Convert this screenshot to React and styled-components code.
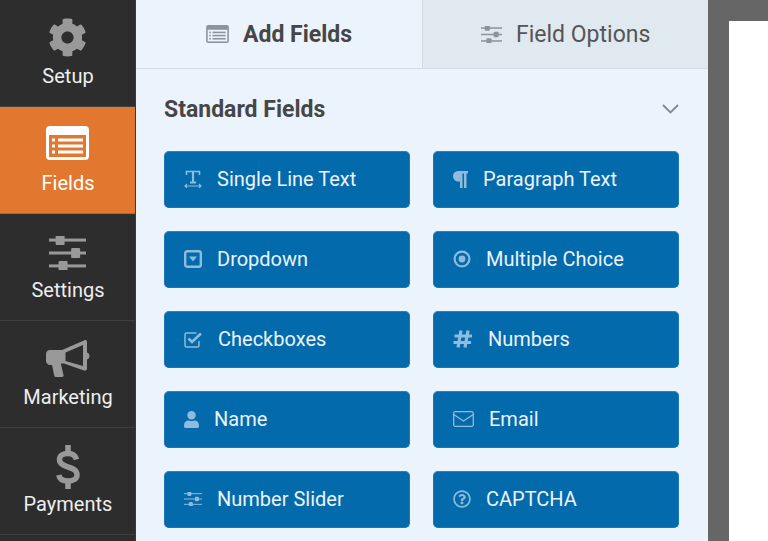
import React from "react"
import styled, { createGlobalStyle } from "styled-components"
import { FaCog, FaUser, FaRegQuestionCircle } from "react-icons/fa"

const Global = createGlobalStyle`
html, body {
  margin: 0;
  padding: 0;
  height: 541px;
  overflow: hidden;
  font-family: Roboto, "Liberation Sans", sans-serif;
}
svg {
  flex: none;
}
`

const Page = styled.div`
display: flex;
width: 768px;
height: 541px;
overflow: hidden;
`

const Sidebar = styled.nav`
width: 136px;
flex: none;
background: #2d2d2d;
border-right: 1px solid #3a3a3a;
box-sizing: border-box;
`

const NavItem = styled.div`
height: 107px;
box-sizing: border-box;
border-bottom: 1px solid ${p => (p.$active ? "#b9622a" : "#404040")};
background: ${p => (p.$active ? "#e27730" : "transparent")};
color: ${p => (p.$active ? "#fff" : "#999")};
display: flex;
flex-direction: column;
align-items: center;
padding-top: 18px;
`

const NavIcon = styled.div`
height: 38px;
display: flex;
align-items: center;
justify-content: center;
transform: translateY(${p => p.$shift || 0}px);
`

const NavLabel = styled.div`
margin-top: 8px;
padding-left: 1px;
font-size: 20px;
line-height: 24px;
color: ${p => (p.$active ? "#fff" : "#eee")};
`

const Panel = styled.main`
width: 572px;
flex: none;
background: #ebf3fc;
`

const Tabs = styled.div`
display: flex;
height: 69px;
box-sizing: border-box;
border-bottom: 1px solid #d3dbe3;
`

const Tab = styled.div`
flex: ${p => (p.$active ? "0 0 287px" : "1")};
box-sizing: border-box;
display: flex;
align-items: center;
padding-left: ${p => (p.$active ? "70px" : "58px")};
gap: 14px;
background: ${p => (p.$active ? "#ebf3fc" : "#e0e8f0")};
border-right: ${p => (p.$active ? "1px solid #d3dbe3" : "none")};
color: ${p => (p.$active ? "#464646" : "#555")};
font-size: 23px;
font-weight: ${p => (p.$active ? 700 : 400)};
`

const TabIcon = styled.span`
display: flex;
color: #8b949c;
`

const Section = styled.section`
padding: 0 29px 0 28px;
`

const SectionHead = styled.div`
height: 80px;
margin-bottom: 2px;
display: flex;
align-items: center;
justify-content: space-between;
color: #464646;
font-size: 23px;
font-weight: 700;
`

const FieldGrid = styled.div`
display: grid;
grid-template-columns: 246px 246px;
column-gap: 23px;
row-gap: 23px;
`

const FieldBtn = styled.div`
height: 57px;
box-sizing: border-box;
background: #036aab;
border: 1px solid #1c78b4;
border-top-color: #2a82bb;
border-radius: 5px;
display: flex;
align-items: center;
padding: 0 0 1px 19px;
gap: 15px;
color: #ebf3fc;
font-size: 20px;
`

const FieldIcon = styled.span`
display: flex;
align-items: center;
justify-content: center;
color: #8fbbdc;
flex: none;
width: ${p => p.$w}px;
`

const Canvas = styled.div`
flex: 1;
background: #666;
padding: 21px 0 0 21px;
`

const Sheet = styled.div`
height: 100%;
background: #fff;
`

const SlidersIcon = ({ w, h, sw = 2, knob = 6 }) => {
  const rows = [
    { y: h * 0.12, x: w * 0.3 },
    { y: h * 0.5, x: w * 0.72 },
    { y: h * 0.88, x: w * 0.38 },
  ]
  return (
    <svg width={w} height={h} viewBox={`0 0 ${w} ${h}`} fill="currentColor">
      {rows.map(r => (
        <g key={r.y}>
          <rect x="0" y={r.y - sw / 2} width={w} height={sw} />
          <rect x={r.x - knob / 2} y={r.y - knob * 0.55} width={knob} height={knob * 1.1} rx="1" />
        </g>
      ))}
    </svg>
  )
}

const FormIcon = ({ w, h, bg, fg }) => (
  <svg width={w} height={h} viewBox="0 0 43 34">
    <rect width="43" height="34" rx="4" fill={bg} />
    <rect x="3" y="9" width="37" height="22" fill={fg} />
    {[14, 20, 26].map(y => (
      <g key={y} fill={bg}>
        <rect x="6" y={y - 1.5} width="3" height={3} />
        <rect x="12" y={y - 1.5} width="25" height={3} />
      </g>
    ))}
  </svg>
)

const Megaphone = () => (
  <svg width="44" height="38" viewBox="0 0 44 38" fill="currentColor" fillRule="evenodd">
    <path d="M39 0c1 0 2 .6 2 2V12.500c1.500.4 2.500 2 2.500 3.500s-1 3-2.500 3.500V28.500c0 1.800-1.500 2.500-3 2L18 23.500H14.800L17.500 35c.3 1.200-.5 2-1.500 2H10c-.8 0-1.500-.5-1.700-1.300L6 25H4C2 25 0 23 0 21V14C0 12 1.500 10 4 10H16L38 .5ZM19.500 12.500V21L37 26V5Z" />
  </svg>
)

const Dollar = () => (
  <svg width="24" height="44" viewBox="0 0 24 44" fill="none" stroke="currentColor" strokeWidth="5.500">
    <path d="M20.500 14.500C19.500 10.500 16 8.500 12 8.500C7 8.500 3.500 10.500 3.500 14.500C3.500 19 8 20.500 12 22C17 23.500 21 25 21 30C21 34 17 36 12 36C7 36 3.500 34 2.800 30" />
    <path d="M12 0V8M12 36V44" />
  </svg>
)

const Chevron = () => (
  <svg width="17" height="10" viewBox="0 0 17 10" fill="none" stroke="#888" strokeWidth="1.800">
    <path d="M1 1l7.500 7.500L16 1" />
  </svg>
)

const TextIcon = () => (
  <svg width="18" height="18" viewBox="0 0 18 18" fill="none" stroke="currentColor">
    <path d="M2.500 5V1.500h13V5" strokeWidth="1.600" />
    <path d="M9 1.500V12.500M6 12.500h6" strokeWidth="2.200" />
    <path d="M1 16h16M3 14l-2 2 2 2M15 14l2 2-2 2" strokeWidth="1.200" />
  </svg>
)

const ParagraphIcon = () => (
  <svg width="15" height="17" viewBox="0 0 15 17" fill="currentColor">
    <path d="M5.500 0H15V2.500H13.500V17H11V2.500H9.500V17H7V10.500H5.500C2.500 10.500 0 8.200 0 5.200S2.500 0 5.500 0Z" />
  </svg>
)

const DropdownIcon = () => (
  <svg width="18" height="18" viewBox="0 0 18 18">
    <rect x="1.200" y="1.200" width="15.600" height="15.600" rx="2" fill="none" stroke="currentColor" strokeWidth="2.400" />
    <path d="M5 6.500h8L9 11.500Z" fill="currentColor" />
  </svg>
)

const RadioIcon = () => (
  <svg width="18" height="18" viewBox="0 0 18 18" fill="none" stroke="currentColor" strokeWidth="2.200">
    <circle cx="9" cy="9" r="7.400" />
    <circle cx="9" cy="9" r="3.400" fill="currentColor" stroke="none" />
  </svg>
)

const CheckIcon = () => (
  <svg width="19" height="17" viewBox="0 0 19 17" fill="none" stroke="currentColor">
    <path d="M12.500 2H3C1.800 2 1 2.800 1 4V14C1 15.200 1.800 16 3 16H13C14.200 16 15 15.200 15 14V10" strokeWidth="1.500" />
    <path d="M4.500 7.500L8 11L17 2.500" strokeWidth="2.600" />
  </svg>
)

const HashIcon = () => (
  <svg width="20" height="18" viewBox="0 0 20 18" fill="none" stroke="currentColor" strokeWidth="3.200">
    <path d="M8 0.500L5 17.500M15 0.500L12 17.500M1.500 6H19M0.500 12.500H18" />
  </svg>
)

const EnvelopeIcon = () => (
  <svg width="21" height="16" viewBox="0 0 21 16" fill="none" stroke="currentColor" strokeWidth="1.300">
    <rect x=".7" y=".7" width="19.600" height="14.600" rx="1.500" />
    <path d="M.7 3.500L10.500 10L20.300 3.500" />
  </svg>
)

const NAV = [
  { label: "Setup", icon: <FaCog size={39} /> },
  { label: "Fields", active: true, shift: -1, icon: <FormIcon w={43} h={34} bg="#fff" fg="#e27730" /> },
  { label: "Settings", shift: 2, icon: <SlidersIcon w={37} h={34} sw={3} knob={9} /> },
  { label: "Marketing", shift: 1, icon: <Megaphone /> },
  { label: "Payments", shift: 2, icon: <Dollar /> },
  { label: "", icon: null },
]

const FIELDS = [
  { label: "Single Line Text", w: 18, icon: <TextIcon /> },
  { label: "Paragraph Text", w: 15, icon: <ParagraphIcon /> },
  { label: "Dropdown", w: 18, icon: <DropdownIcon /> },
  { label: "Multiple Choice", w: 18, icon: <RadioIcon /> },
  { label: "Checkboxes", w: 19, icon: <CheckIcon /> },
  { label: "Numbers", w: 20, icon: <HashIcon /> },
  { label: "Name", w: 15, icon: <FaUser size={17} /> },
  { label: "Email", w: 21, icon: <EnvelopeIcon /> },
  { label: "Number Slider", w: 18, icon: <SlidersIcon w={18} h={14} sw={1} knob={4} /> },
  { label: "CAPTCHA", w: 18, icon: <FaRegQuestionCircle size={18} /> },
]

const App = () => {
  return (
    <Page>
      <Global />
      <Sidebar>
        {NAV.map(it => (
          <NavItem key={it.label} $active={it.active}>
            <NavIcon $shift={it.shift}>{it.icon}</NavIcon>
            <NavLabel $active={it.active}>{it.label}</NavLabel>
          </NavItem>
        ))}
      </Sidebar>
      <Panel>
        <Tabs>
          <Tab $active>
            <FormIcon w={23} h={18} bg="#8b949c" fg="#ebf3fc" />
            Add Fields
          </Tab>
          <Tab>
            <TabIcon>
              <SlidersIcon w={21} h={17} sw={1.500} knob={5} />
            </TabIcon>
            Field Options
          </Tab>
        </Tabs>
        <Section>
          <SectionHead>
            Standard Fields
            <Chevron />
          </SectionHead>
          <FieldGrid>
            {FIELDS.map(it => (
              <FieldBtn key={it.label}>
                <FieldIcon $w={it.w}>{it.icon}</FieldIcon>
                {it.label}
              </FieldBtn>
            ))}
          </FieldGrid>
        </Section>
      </Panel>
      <Canvas>
        <Sheet />
      </Canvas>
    </Page>
  )
}

export default App
